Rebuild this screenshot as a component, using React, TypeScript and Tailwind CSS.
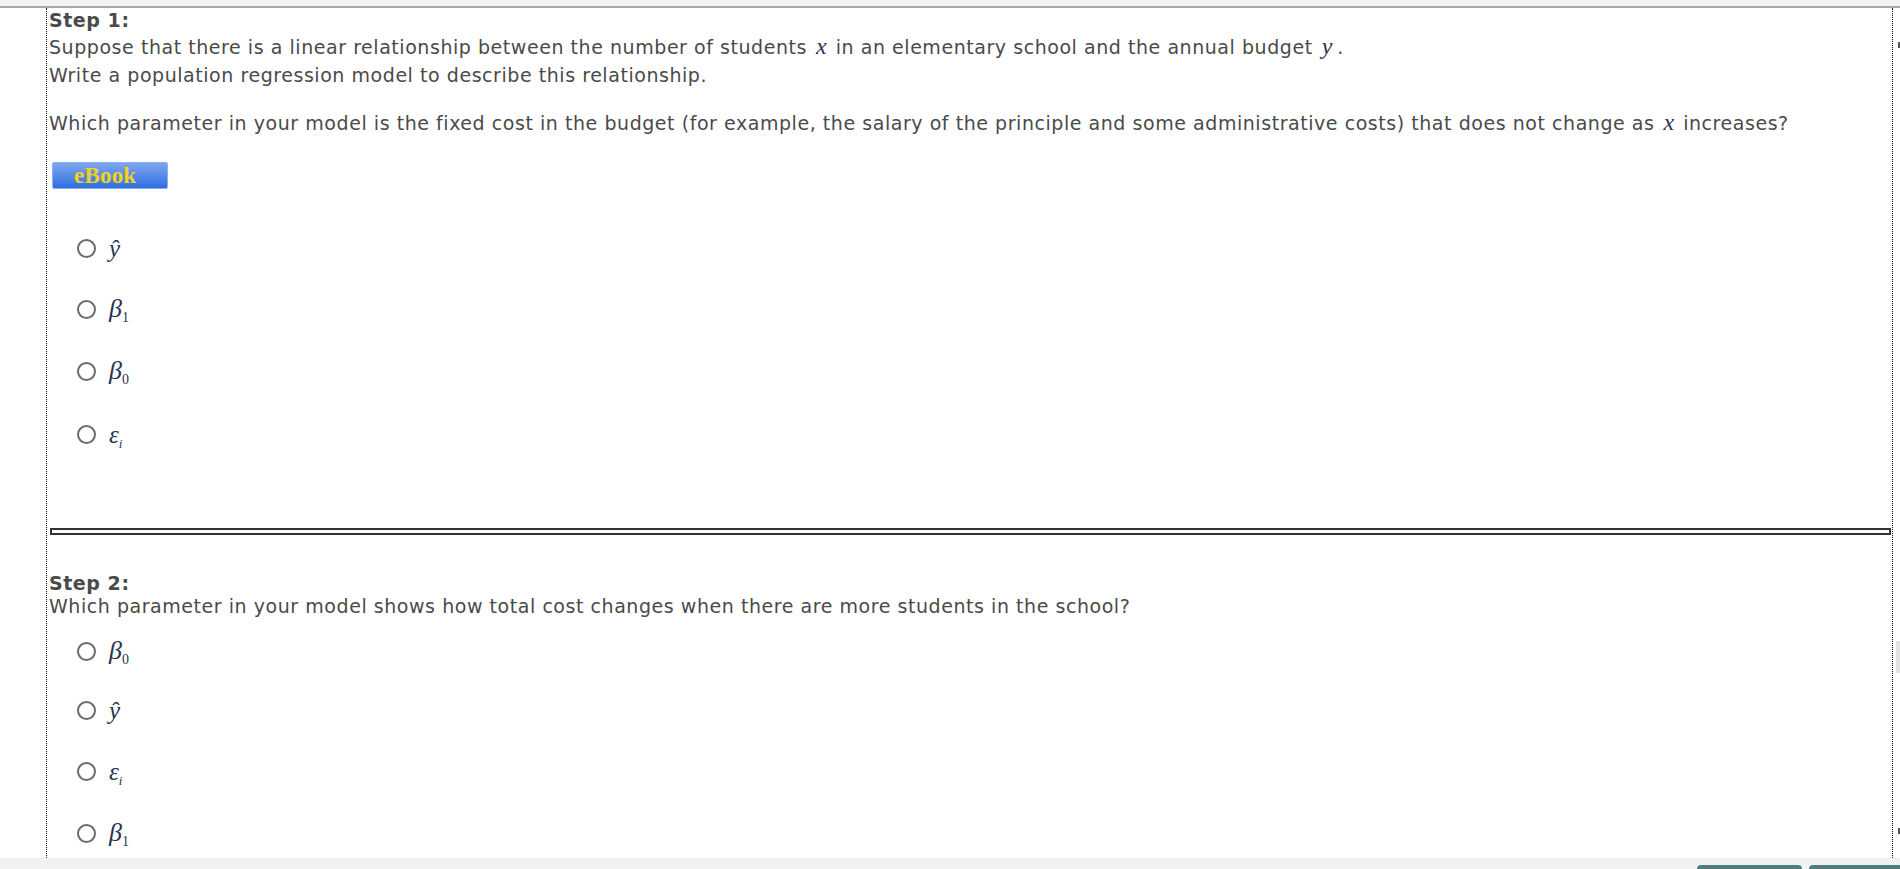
import React from 'react';

const TEXT = 'font-["DejaVu_Sans",Verdana,sans-serif] text-[19px] tracking-[0.55px] text-[#4a4a4a]';
const MATH = 'font-["Liberation_Serif","Times_New_Roman",serif] italic text-[#2a3350] tracking-normal';

type Sym = 'yhat' | 'b1' | 'b0' | 'eps';

function MathSym({ s }: { s: Sym }) {
  if (s === 'yhat') {
    return <span className={`${MATH} text-[25px] leading-none`}>ŷ</span>;
  }
  if (s === 'eps') {
    return (
      <span className={`${MATH} text-[25px] leading-none`}>
        ε<sub className="text-[13px] relative top-[5px] align-baseline">i</sub>
      </span>
    );
  }
  return (
    <span className={`${MATH} text-[26px] leading-none`}>
      β<sub className="text-[14px] relative top-[5px] align-baseline not-italic">{s === 'b1' ? '1' : '0'}</sub>
    </span>
  );
}

function Option({ s }: { s: Sym }) {
  return (
    <div className="flex items-center h-[30px] pl-[28px]">
      <span className="w-[19px] h-[19px] rounded-full border-2 border-[#6b6b6b] bg-white shrink-0" />
      <span className="ml-[13px] flex items-center h-[30px]">
        <MathSym s={s} />
      </span>
    </div>
  );
}

function Line({ children, bold, className = '' }: { children: React.ReactNode; bold?: boolean; className?: string }) {
  return (
    <div className={`h-[23px] leading-[23px] whitespace-nowrap ${bold ? 'font-bold' : ''} ${className}`}>
      {children}
    </div>
  );
}

function Var({ v }: { v: string }) {
  return <span className={`${MATH} text-[24px] mx-[9px]`}>{v}</span>;
}

export default function App() {
  return (
    <div className={`w-[1900px] h-[869px] bg-white overflow-hidden flex flex-col ${TEXT}`}>
      {/* top chrome */}
      <div className="h-[6px] bg-[#f2f2f2] shrink-0" />
      <div className="h-[2px] bg-[#a8a8a8] shrink-0" />

      <div className="flex flex-1 min-h-0">
        <div className="w-[46px] shrink-0" />
        <div className="relative flex-1 border-l border-r border-dotted border-[#111] pl-[2px] pr-[1px]">
          {/* right edge solid segment */}
          <div className="absolute right-[-2px] top-0 w-px h-[87px] bg-[#8a8a8a]" />

          {/* Step 1 */}
          <Line bold className="mt-[1px]">Step 1:</Line>
          <Line className="mt-[3px]">
            Suppose that there is a linear relationship between the number of students
            <Var v="x" />
            in an elementary school and the annual budget
            <Var v="y" />
            <span className="-ml-[4px]">.</span>
          </Line>
          <Line className="mt-[6px]">Write a population regression model to describe this relationship.</Line>
          <Line className="mt-[24px]">
            Which parameter in your model is the fixed cost in the budget (for example, the salary of the principle and some
            administrative costs) that does not change as
            <Var v="x" />
            increases?
          </Line>

          {/* eBook */}
          <div className="mt-[28px] ml-[3px] w-[116px] h-[27px] rounded-[2px] border border-[#8fb0f0] bg-gradient-to-b from-[#7ea6ee] to-[#2f6ee0] flex items-center pl-[21px]">
            <span className='font-["Liberation_Serif","Times_New_Roman",serif] text-[23px] leading-none text-[#f4d21a] font-bold tracking-[0.2px]'>
              eBook
            </span>
          </div>

          {/* options step 1 */}
          <div className="mt-[44px] flex flex-col gap-[31px]">
            <Option s="yhat" />
            <Option s="b1" />
            <div className="mt-[1px]"><Option s="b0" /></div>
            <div className="mt-[2px]"><Option s="eps" /></div>
          </div>

          {/* separator */}
          <div className="mt-[79px] ml-px mr-0 h-[7px] border-2 border-[#333]" />

          {/* Step 2 */}
          <Line bold className="mt-[37px]">Step 2:</Line>
          <Line>Which parameter in your model shows how total cost changes when there are more students in the school?</Line>

          <div className="mt-[18px] flex flex-col gap-[30px]">
            <Option s="b0" />
            <div className="-mt-[1px]"><Option s="yhat" /></div>
            <div className="mt-[1px]"><Option s="eps" /></div>
            <div className="mt-[2px]"><Option s="b1" /></div>
          </div>
        </div>
        <div className="relative w-[7px] shrink-0 bg-white">
          <div className="absolute right-0 top-[34px] w-[2px] h-[6px] bg-[#555]" />
          <div className="absolute right-0 top-[633px] w-[4px] h-[32px] bg-[#e2e2e2]" />
          <div className="absolute right-0 top-[820px] w-[2px] h-[6px] bg-[#555]" />
        </div>
      </div>

      {/* bottom chrome */}
      <div className="h-[11px] bg-[#f2f2f2] shrink-0 flex items-end justify-end gap-[7px]">
        <div className="w-[105px] h-[4px] rounded-t-[6px] bg-[#4c7f7b]" />
        <div className="w-[91px] h-[4px] rounded-tl-[6px] bg-[#4c7f7b]" />
      </div>
    </div>
  );
}
